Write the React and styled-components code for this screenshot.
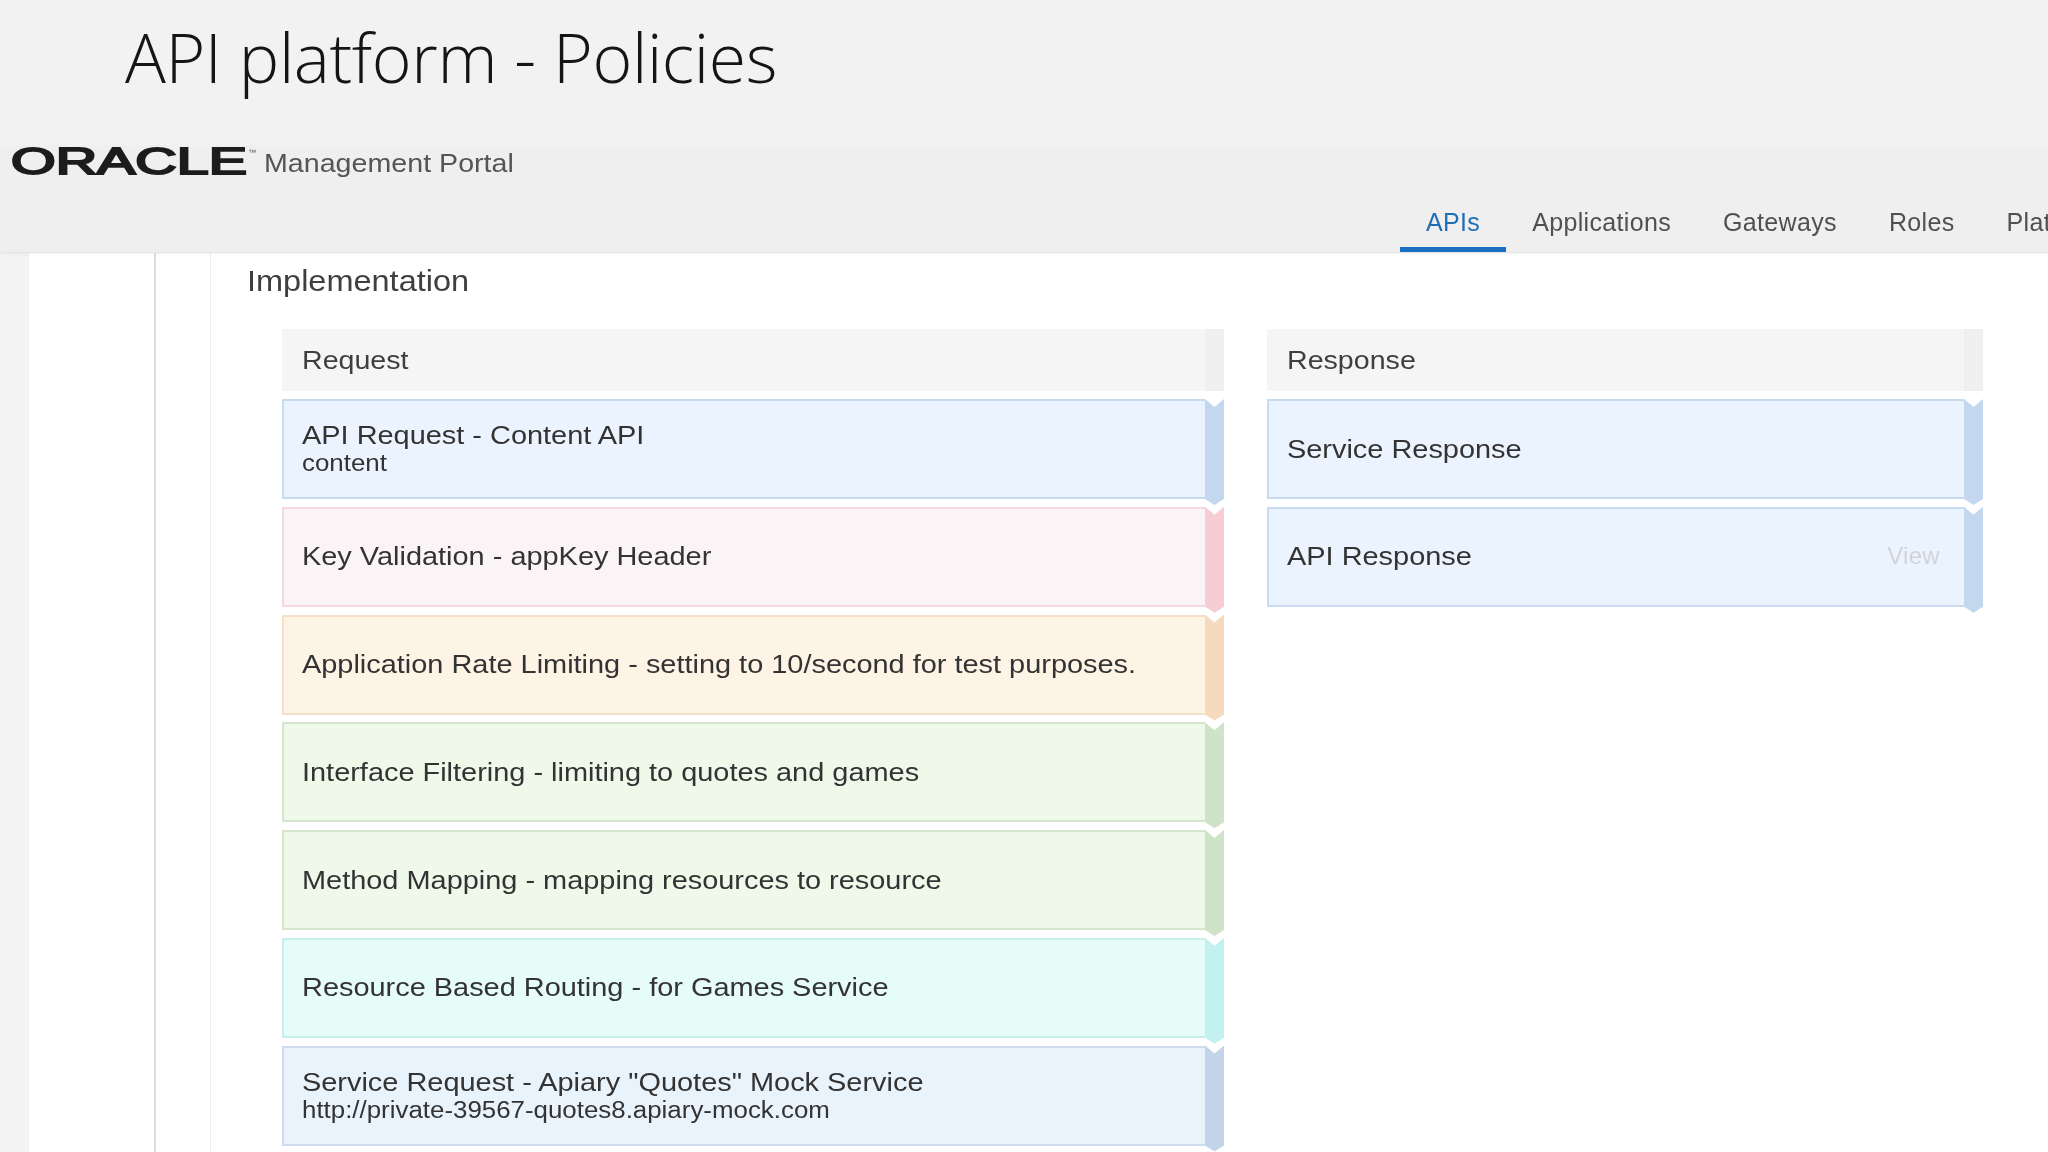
import styled, { createGlobalStyle } from "styled-components";

const GlobalStyle = createGlobalStyle`
  html, body {
    margin: 0;
    padding: 0;
    background: #fff;
  }
  body {
    font-family: "Liberation Sans", Arial, sans-serif;
  }
`;

const tones = {
  blue: { bg: "#ebf4fe", border: "#c8daf0", strip: "#c3d7ee" },
  pink: { bg: "#fbf4f6", border: "#f6d9e0", strip: "#f6ccd5" },
  orange: { bg: "#fdf4e6", border: "#f6dfc6", strip: "#f7dabd" },
  green: { bg: "#eef9ea", border: "#d6e6ce", strip: "#cfe3c8" },
  cyan: { bg: "#e6fcf8", border: "#c8efe9", strip: "#c2f1ef" },
  slate: { bg: "#e8f3fc", border: "#cfdcee", strip: "#c4d4ea" },
};

const Page = styled.div`
  width: 2048px;
  height: 1152px;
  overflow: hidden;
  display: flex;
  flex-direction: column;
  background: #fff;
`;

const TitleBand = styled.div`
  height: 146px;
  flex: none;
  box-sizing: border-box;
  padding: 15px 0 0 125px;
  background: #f2f2f2;
`;

const Title = styled.h1`
  margin: 0;
  font-family: "Open Sans", sans-serif;
  font-weight: 300;
  font-size: 68px;
  line-height: 84px;
  letter-spacing: -0.4px;
  color: #151515;
  white-space: nowrap;
`;

const PortalBar = styled.header`
  height: 107px;
  flex: none;
  box-sizing: border-box;
  display: flex;
  flex-direction: column;
  background: #efefef;
  border-bottom: 1px solid #e6e6e6;
  box-shadow: 0 1px 3px rgba(0, 0, 0, 0.05);
  position: relative;
  z-index: 1;
  filter: blur(0.5px);
`;

const Brand = styled.div`
  display: flex;
  align-items: flex-end;
  gap: 9px;
  height: 36px;
  padding-left: 10px;
`;

const Logo = styled.svg`
  display: block;
  width: 245px;
  height: 36px;
  overflow: visible;
`;

const PortalName = styled.span`
  margin-bottom: 4px;
  font-size: 25px;
  line-height: 30px;
  color: #555;
  white-space: nowrap;
  transform: scaleX(1.145);
  transform-origin: left center;
`;

const Tabs = styled.nav`
  display: flex;
  margin: auto 0 0 1400px;
`;

const Tab = styled.a`
  flex: none;
  height: 61px;
  box-sizing: border-box;
  padding: 6px 26px 0;
  display: flex;
  align-items: center;
  font-size: 25px;
  letter-spacing: 0.34px;
  white-space: nowrap;
  color: ${(p) => (p.$active ? "#1f6fb8" : "#505050")};
  border-bottom: 5px solid ${(p) => (p.$active ? "#1a6fc0" : "transparent")};
`;

const Body = styled.div`
  flex: 1;
  min-height: 0;
  display: flex;
  filter: blur(0.5px);
`;

const Gutter = styled.div`
  width: 29px;
  flex: none;
  background: #f3f3f3;
`;

const Sidebar = styled.div`
  width: 125px;
  flex: none;
  border-right: 2px solid #dedede;
`;

const SubNav = styled.div`
  width: 54px;
  flex: none;
  border-right: 1px solid #eeeeee;
`;

const Main = styled.main`
  flex: 1;
  min-width: 0;
  padding: 7px 0 0 36px;
`;

const Heading = styled.h2`
  margin: 0;
  font-size: 29px;
  font-weight: 400;
  line-height: 42px;
  color: #3f3f3f;
  transform: scaleX(1.12);
  transform-origin: left center;
`;

const Flows = styled.div`
  display: flex;
  gap: 43px;
  margin: 27px 0 0 35px;
`;

const Flow = styled.section`
  width: ${(p) => p.$width}px;
  flex: none;
  display: flex;
  flex-direction: column;
  gap: 7.75px;
`;

const FlowHead = styled.div`
  height: 62px;
  margin-bottom: 0.25px;
  display: flex;
  background: #f5f5f5;
`;

const HeadLabel = styled.div`
  flex: 1;
  padding-left: 20px;
  display: flex;
  align-items: center;
`;

const HeadText = styled.span`
  font-size: 26px;
  color: #3f3f3f;
  transform: scaleX(1.1);
  transform-origin: left center;
`;

const HeadStrip = styled.div`
  width: 19px;
  flex: none;
  background: #efefef;
`;

const Row = styled.div`
  height: 100px;
  display: flex;
`;

const RowBody = styled.div`
  flex: 1;
  min-width: 0;
  box-sizing: border-box;
  padding: 0 24px 1px 18px;
  display: flex;
  align-items: center;
  justify-content: space-between;
  background: ${(p) => tones[p.$tone].bg};
  border: 2px solid ${(p) => tones[p.$tone].border};
  border-right: none;
`;

const RowStrip = styled.div`
  width: 19px;
  flex: none;
  margin-bottom: -6px;
  background: ${(p) => tones[p.$tone].strip};
  clip-path: polygon(
    0 0,
    50% 8px,
    100% 0,
    100% calc(100% - 6px),
    50% 100%,
    0 calc(100% - 6px)
  );
`;

const RowTitle = styled.div`
  font-size: 26px;
  line-height: 30px;
  color: #333;
  white-space: nowrap;
  transform: scaleX(1.112);
  transform-origin: left center;
`;

const RowSub = styled.div`
  font-size: 23px;
  line-height: 27px;
  color: #333;
  white-space: nowrap;
  transform: scaleX(1.125);
  transform-origin: left center;
`;

const ViewLink = styled.span`
  font-size: 24px;
  letter-spacing: 0.3px;
  color: #d0d4d9;
`;

const requestRows = [
  { tone: "blue", title: "API Request - Content API", sub: "content" },
  { tone: "pink", title: "Key Validation - appKey Header" },
  {
    tone: "orange",
    title:
      "Application Rate Limiting - setting to 10/second for test purposes.",
  },
  { tone: "green", title: "Interface Filtering - limiting to quotes and games" },
  { tone: "green", title: "Method Mapping - mapping resources to resource" },
  { tone: "cyan", title: "Resource Based Routing - for Games Service" },
  {
    tone: "slate",
    title: 'Service Request - Apiary "Quotes" Mock Service',
    sub: "http://private-39567-quotes8.apiary-mock.com",
  },
];

const responseRows = [
  { tone: "blue", title: "Service Response" },
  { tone: "blue", title: "API Response", view: true },
];

const tabs = ["APIs", "Applications", "Gateways", "Roles", "Platform"];

const PolicyFlow = ({ label, rows, width }) => (
  <Flow $width={width}>
    <FlowHead>
      <HeadLabel>
        <HeadText>{label}</HeadText>
      </HeadLabel>
      <HeadStrip />
    </FlowHead>
    {rows.map((row) => (
      <Row key={row.title}>
        <RowBody $tone={row.tone}>
          <div>
            <RowTitle>{row.title}</RowTitle>
            {row.sub && <RowSub>{row.sub}</RowSub>}
          </div>
          {row.view && <ViewLink>View</ViewLink>}
        </RowBody>
        <RowStrip $tone={row.tone} />
      </Row>
    ))}
  </Flow>
);

export default function App() {
  return (
    <Page>
      <GlobalStyle />
      <TitleBand>
        <Title>API platform - Policies</Title>
      </TitleBand>
      <PortalBar>
        <Brand>
          <Logo viewBox="0 0 245 36">
            <text
              x="1"
              y="28"
              textLength="236"
              lengthAdjust="spacingAndGlyphs"
              fontFamily="Liberation Sans"
              fontWeight="400"
              fontSize="36"
              fill="#1c1c1c"
              stroke="#1c1c1c"
              strokeWidth="2"
            >
              ORACLE
            </text>
            <text x="238" y="9" fontFamily="Liberation Sans" fontSize="8" fill="#555">
              ™
            </text>
          </Logo>
          <PortalName>Management Portal</PortalName>
        </Brand>
        <Tabs>
          {tabs.map((tab, i) => (
            <Tab key={tab} $active={i === 0}>
              {tab}
            </Tab>
          ))}
        </Tabs>
      </PortalBar>
      <Body>
        <Gutter />
        <Sidebar />
        <SubNav />
        <Main>
          <Heading>Implementation</Heading>
          <Flows>
            <PolicyFlow label="Request" rows={requestRows} width={942} />
            <PolicyFlow label="Response" rows={responseRows} width={716} />
          </Flows>
        </Main>
      </Body>
    </Page>
  );
}
